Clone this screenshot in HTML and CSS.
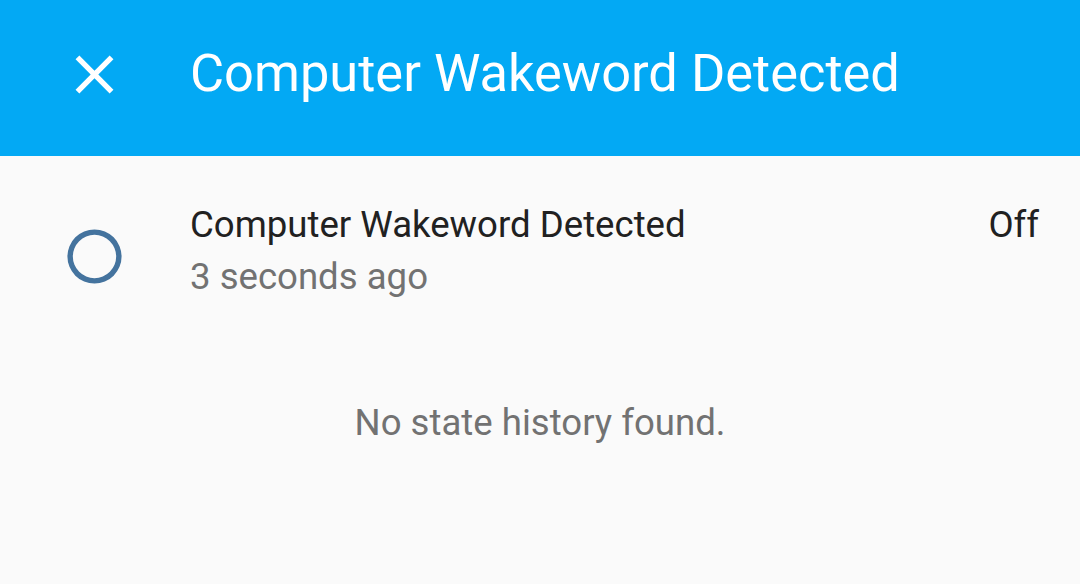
FILE: index.html
```html
<!DOCTYPE html>
<html>
<head>
<meta charset="utf-8">
<link rel="stylesheet" href="styles.css">
</head>
<body>
<div class="app">
  <header class="toolbar">
    <div class="close">
      <svg viewBox="0 0 24 24" width="65" height="65"><path fill="#ffffff" d="M19 6.41L17.59 5 12 10.59 6.41 5 5 6.41 10.59 12 5 17.59 6.41 19 12 13.41 17.59 19 19 17.59 13.41 12z"/></svg>
    </div>
    <div class="title">Computer Wakeword Detected</div>
  </header>
  <main class="content">
    <div class="row">
      <div class="icon">
        <svg viewBox="0 0 24 24" width="65" height="65"><path fill="#44739e" d="M12,20A8,8 0 0,1 4,12A8,8 0 0,1 12,4A8,8 0 0,1 20,12A8,8 0 0,1 12,20M12,2A10,10 0 0,0 2,12A10,10 0 0,0 12,22A10,10 0 0,0 22,12A10,10 0 0,0 12,2Z"/></svg>
      </div>
      <div class="info">
        <div class="name">Computer Wakeword Detected</div>
        <div class="time">3 seconds ago</div>
      </div>
      <div class="state">Off</div>
    </div>
    <div class="empty">No state history found.</div>
  </main>
</div>
</body>
</html>
```
FILE: styles.css
```css
html, body {
  margin: 0;
  padding: 0;
  background: #fafafa;
}
body {
  font-family: Roboto, "Noto Sans", sans-serif;
  width: 1080px;
  height: 584px;
  overflow: hidden;
}
.toolbar {
  height: 156px;
  background: #03a9f4;
  display: flex;
  align-items: center;
  color: #ffffff;
}
.close {
  width: 65px;
  height: 65px;
  margin-left: 62px;
  margin-right: 63px;
  margin-top: -8px;
}
.close svg { display: block; }
.title {
  font-size: 52.4px;
  font-weight: 400;
  line-height: 64px;
  margin-top: -10px;
}
.content {
  padding: 43px 41px 0 62px;
}
.row {
  display: flex;
  align-items: flex-start;
}
.icon {
  width: 65px;
  height: 65px;
  margin-top: 25px;
  margin-right: 63px;
}
.icon svg { display: block; }
.info {
  flex: 1;
}
.name {
  font-size: 36.6px;
  line-height: 52px;
  color: #212121;
}
.time {
  font-size: 36.6px;
  line-height: 52px;
  color: #727272;
}
.state {
  font-size: 36.6px;
  line-height: 52px;
  color: #212121;
}
.empty {
  margin-top: 94px;
  margin-left: -21px;
  text-align: center;
  font-size: 36.6px;
  line-height: 52px;
  color: #727272;
}
```
